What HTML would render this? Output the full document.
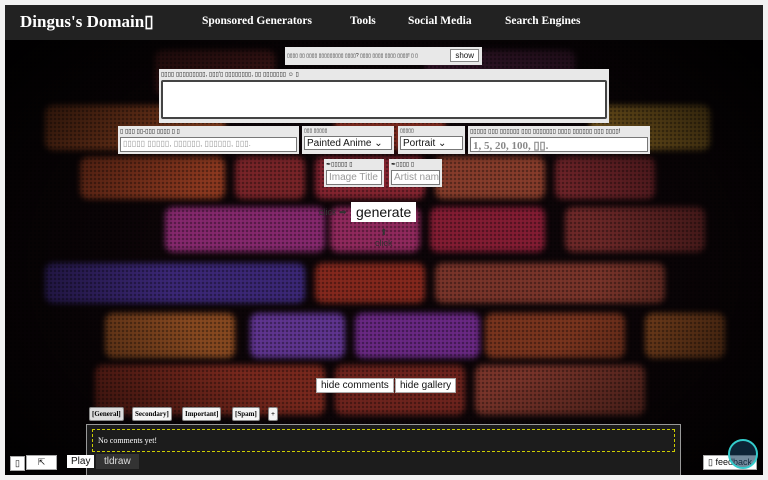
<!DOCTYPE html>
<html><head><meta charset="utf-8"><style>
*{box-sizing:border-box;margin:0;padding:0}
body{width:768px;height:480px;background:#f2f2f2;font-family:"Liberation Sans",sans-serif;position:relative;overflow:hidden}
#frame{position:absolute;left:5px;top:5px;width:758px;height:470px;background:#0d0508;overflow:hidden}
.b{position:absolute;border-radius:8px;filter:blur(3px) saturate(.9);opacity:.78}
#tex{position:absolute;inset:0;background-image:radial-gradient(rgba(0,0,0,.35) 1px,transparent 1.5px);background-size:4px 4px}
#vig{position:absolute;inset:0;background:radial-gradient(ellipse at 50% 55%,rgba(0,0,0,0) 40%,rgba(0,0,0,.9) 88%)}
#nav{position:absolute;left:0;top:0;width:758px;height:35px;background:#222;color:#fff;font-family:"Liberation Serif",serif;font-weight:bold}
#nav .t{position:absolute;left:15px;top:7px;font-size:17px}
#nav a{position:absolute;top:10px;font-size:11.5px}
.box{position:absolute;background:#e8e8e8;font-size:6px;color:#111;padding:2px 2px}
.inp{background:#fff;border:1px solid #777;color:#999;font-size:9px;padding:1px 2px;height:15px;margin-top:2px;overflow:hidden;white-space:nowrap}
.btn{position:absolute;background:#fff;border:1px solid #aaa;font-size:10px;color:#111;padding:1px 4px}
.tab{position:absolute;top:402px;background:#ddd;border:1px solid #888;font-family:"Liberation Serif",serif;font-size:7px;font-weight:bold;padding:2px 2px;border-radius:2px}
</style></head><body>
<div id="frame">
<div class="b" style="left:40px;top:100px;width:180px;height:45px;background:#b85020"></div>
<div class="b" style="left:330px;top:100px;width:110px;height:45px;background:#a03020"></div>
<div class="b" style="left:585px;top:100px;width:120px;height:45px;background:#b08020"></div>
<div class="b" style="left:150px;top:45px;width:120px;height:45px;background:#602020"></div>
<div class="b" style="left:420px;top:45px;width:150px;height:45px;background:#502040"></div>
<div class="b" style="left:75px;top:152px;width:145px;height:42px;background:#b84520"></div>
<div class="b" style="left:230px;top:152px;width:70px;height:42px;background:#a02a30"></div>
<div class="b" style="left:310px;top:152px;width:110px;height:42px;background:#b02a3a"></div>
<div class="b" style="left:430px;top:152px;width:110px;height:42px;background:#b04a30"></div>
<div class="b" style="left:550px;top:152px;width:100px;height:42px;background:#902a30"></div>
<div class="b" style="left:160px;top:202px;width:160px;height:45px;background:#b03090"></div>
<div class="b" style="left:325px;top:202px;width:90px;height:45px;background:#c0307a"></div>
<div class="b" style="left:425px;top:202px;width:115px;height:45px;background:#b02040"></div>
<div class="b" style="left:560px;top:202px;width:140px;height:45px;background:#903030"></div>
<div class="b" style="left:40px;top:258px;width:260px;height:40px;background:#4a30a0"></div>
<div class="b" style="left:310px;top:258px;width:110px;height:40px;background:#b03020"></div>
<div class="b" style="left:430px;top:258px;width:230px;height:40px;background:#a04030"></div>
<div class="b" style="left:100px;top:308px;width:130px;height:45px;background:#b05a20"></div>
<div class="b" style="left:245px;top:308px;width:95px;height:45px;background:#7a40c0"></div>
<div class="b" style="left:350px;top:308px;width:125px;height:45px;background:#8a30b0"></div>
<div class="b" style="left:480px;top:308px;width:140px;height:45px;background:#a04020"></div>
<div class="b" style="left:640px;top:308px;width:80px;height:45px;background:#b05a20"></div>
<div class="b" style="left:90px;top:360px;width:230px;height:50px;background:#a03020"></div>
<div class="b" style="left:330px;top:360px;width:130px;height:50px;background:#902a20"></div>
<div class="b" style="left:470px;top:360px;width:170px;height:50px;background:#a04030"></div>
<div id="tex"></div>
<div id="vig"></div>
<div id="nav"><span class="t">Dingus's Domain▯</span><a style="left:197px">Sponsored Generators</a><a style="left:345px">Tools</a><a style="left:403px">Social Media</a><a style="left:500px">Search Engines</a></div>
<div class="box" style="left:280px;top:42px;width:197px;height:18px;font-size:5px;padding-top:6px">▯▯▯▯ ▯▯ ▯▯▯▯ ▯▯▯▯▯▯▯▯▯ ▯▯▯▯? ▯▯▯▯ ▯▯▯▯ ▯▯▯▯ ▯▯▯▯! ▯ ▯<span style="position:absolute;right:3px;top:2px;background:#fff;border:1px solid #888;font-size:8px;padding:1px 4px">show</span></div>
<div class="box" style="left:154px;top:64px;width:450px;height:54px">▯▯▯▯ ▯▯▯▯▯▯▯▯▯, ▯▯▯'▯ ▯▯▯▯▯▯▯▯, ▯▯ ▯▯▯▯▯▯▯ ☺ ▯<div style="background:#fff;border:2px solid #444;border-radius:2px;height:39px;margin-top:2px"></div></div>
<div class="box" style="left:113px;top:121px;width:181px;height:28px">▯ ▯▯▯ ▯▯-▯▯▯ ▯▯▯▯ ▯ ▯<div class="inp" style="font-size:8px">▯▯▯▯▯ ▯▯▯▯▯, ▯▯▯▯▯▯, ▯▯▯▯▯▯, ▯▯▯.</div></div>
<div class="box" style="left:297px;top:121px;width:92px;height:28px;font-size:5px">▯▯▯ ▯▯▯▯▯<div class="inp" style="color:#111;font-size:10px;height:14px">Painted Anime ⌄</div></div>
<div class="box" style="left:393px;top:121px;width:67px;height:28px;font-size:5px">▯▯▯▯▯<div class="inp" style="color:#111;font-size:10px;height:14px">Portrait ⌄</div></div>
<div class="box" style="left:463px;top:121px;width:182px;height:28px">▯▯▯▯▯ ▯▯▯ ▯▯▯▯▯▯ ▯▯▯ ▯▯▯▯▯▯▯ ▯▯▯▯ ▯▯▯▯▯▯ ▯▯▯ ▯▯▯▯!<div class="inp" style="font-family:'Liberation Serif',serif;font-size:11px;font-weight:bold;color:#888">1, 5, 20, 100, ▯▯.</div></div>
<div class="box" style="left:319px;top:154px;width:60px;height:28px">✒▯▯▯▯▯ ▯<div class="inp" style="font-size:10px">Image Title</div></div>
<div class="box" style="left:384px;top:154px;width:53px;height:28px">✒▯▯▯▯ ▯<div class="inp" style="font-size:10px">Artist name</div></div>
<div style="position:absolute;left:314px;top:202px;font-size:9px;color:#333">click ➡</div>
<div class="btn" style="left:346px;top:197px;font-size:14px;padding:2px 5px;border:none">generate</div>
<div style="position:absolute;left:370px;top:222px;font-size:9px;color:#333;text-align:center">⬆<br>click</div>
<div class="btn" style="left:311px;top:373px">hide comments</div>
<div class="btn" style="left:390px;top:373px">hide gallery</div>
<div class="tab" style="left:84px">[General]</div>
<div class="tab" style="left:127px;background:#f4f4f4">Secondary]</div>
<div class="tab" style="left:177px;background:#f4f4f4">Important]</div>
<div class="tab" style="left:227px;background:#f4f4f4">[Spam]</div>
<div class="tab" style="left:263px;background:#f4f4f4">+</div>
<div style="position:absolute;left:81px;top:419px;width:595px;height:60px;background:#1c1c1c;border:1px solid #999"></div>
<div style="position:absolute;left:87px;top:424px;width:583px;height:23px;border:1px dashed #cc0;color:#fff;font-family:'Liberation Serif',serif;font-size:8px;padding:6px 5px">No comments yet!</div>
<div class="btn" style="left:5px;top:451px;font-size:9px">▯</div>
<div class="btn" style="left:21px;top:450px;width:31px;font-size:9px;text-align:center">⇱</div>
<div class="btn" style="left:62px;top:450px;border:none">Play</div>
<div class="btn" style="left:91px;top:449px;background:#333;color:#ddd;border:none;padding:2px 8px">tldraw</div>
<div class="btn" style="left:698px;top:450px;font-size:9px">▯ feedback</div>
<div style="position:absolute;left:723px;top:434px;width:30px;height:30px;border-radius:50%;border:2px solid #3cc;background:rgba(20,60,90,.6)"></div>
</div>
</body></html>
